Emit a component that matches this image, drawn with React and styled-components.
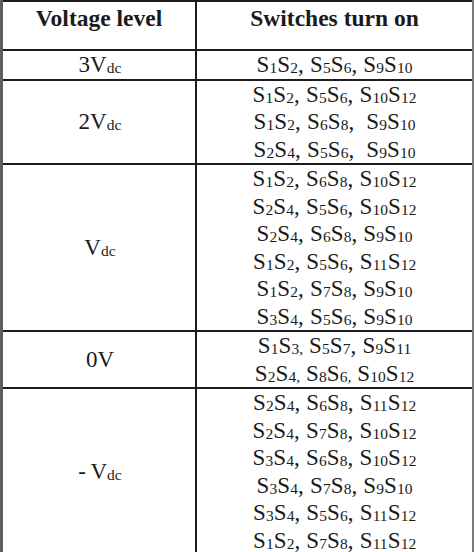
import React from "react";
import styled, { createGlobalStyle } from "styled-components";

const LINE = "#1c1c1c";
const TEXT = "#1a1a1a";
const SERIF = `"Liberation Serif", "Times New Roman", Times, "DejaVu Serif", serif`;

const rows = [
  { label: ["3V", "dc"], lines: ["S1S2, S5S6, S9S10"] },
  {
    label: ["2V", "dc"],
    lines: ["S1S2, S5S6, S10S12", "S1S2, S6S8,  S9S10", "S2S4, S5S6,  S9S10"],
  },
  {
    label: ["V", "dc"],
    lines: [
      "S1S2, S6S8, S10S12",
      "S2S4, S5S6, S10S12",
      "S2S4, S6S8, S9S10",
      "S1S2, S5S6, S11S12",
      "S1S2, S7S8, S9S10",
      "S3S4, S5S6, S9S10",
    ],
  },
  { label: ["0V", ""], lines: ["S1S3^, S5S7, S9S11", "S2S4^, S8S6^, S10S12"] },
  {
    label: ["-\u2009V", "dc"],
    lines: [
      "S2S4, S6S8, S11S12",
      "S2S4, S7S8, S10S12",
      "S3S4, S6S8, S10S12",
      "S3S4, S7S8, S9S10",
      "S3S4, S5S6, S11S12",
      "S1S2, S7S8, S11S12",
    ],
  },
];

// "S12" -> S + subscript 12, "^," -> small comma, double space kept
function renderLine(text) {
  const parts = [];
  const re = /S(\d+)|\^,|  | |,/g;
  let m;
  let i = 0;
  while ((m = re.exec(text))) {
    if (m[1]) {
      parts.push(
        <React.Fragment key={i++}>
          S<Sub>{m[1]}</Sub>
        </React.Fragment>
      );
    } else if (m[0] === "^,") {
      parts.push(<Sub key={i++}>,</Sub>);
    } else if (m[0] === "  ") {
      parts.push(<React.Fragment key={i++}>{"\u00a0\u00a0"}</React.Fragment>);
    } else {
      parts.push(<React.Fragment key={i++}>{m[0]}</React.Fragment>);
    }
  }
  return parts;
}

export default function App() {
  return (
    <>
      <GlobalStyle />
      <Frame>
        <Table>
          <HeaderRow>
            <HeaderCell $left>Voltage level</HeaderCell>
            <HeaderCell>Switches turn on</HeaderCell>
          </HeaderRow>
          {rows.map((row, r) => (
            <Row key={r}>
              <LabelCell>
                <Line>
                  {row.label[0]}
                  {row.label[1] && <Sub>{row.label[1]}</Sub>}
                </Line>
              </LabelCell>
              <Cell>
                {row.lines.map((line, j) => (
                  <Line key={j}>{renderLine(line)}</Line>
                ))}
              </Cell>
            </Row>
          ))}
        </Table>
      </Frame>
    </>
  );
}

const GlobalStyle = createGlobalStyle`
  html, body {
    margin: 0;
    padding: 0;
    background: #ffffff;
    font-family: ${SERIF};
  }
`;

const Frame = styled.div`
  width: 474px;
  height: 552px;
  overflow: hidden;
  box-sizing: border-box;
  border-left: 3px solid #5e5e5e;
  border-right: 2px solid #7c7c7c;
  background: #ffffff;
  font-family: ${SERIF};
  color: ${TEXT};
`;

const Table = styled.div`
  border-top: 2px solid ${LINE};
`;

const Row = styled.div`
  display: grid;
  grid-template-columns: 194px 1fr;
  border-bottom: 2px solid ${LINE};
`;

const HeaderRow = styled(Row)`
  height: 49px;
  box-sizing: border-box;
`;

const HeaderCell = styled.div`
  font-family: ${SERIF};
  font-weight: 700;
  font-size: 23.5px;
  line-height: 30px;
  padding-top: 1px;
  text-align: center;
  border-right: ${(p) => (p.$left ? `2px solid ${LINE}` : "none")};
`;

const LabelCell = styled.div`
  display: flex;
  align-items: center;
  justify-content: center;
  font-size: 23px;
  border-right: 2px solid ${LINE};
  padding-left: 2px;
`;

const Cell = styled.div`
  display: flex;
  flex-direction: column;
  align-items: center;
  font-size: 23px;
  letter-spacing: 0.2px;
`;

const Line = styled.div`
  font-family: ${SERIF};
  height: 27.5px;
  line-height: 27.5px;
  white-space: nowrap;
`;

const Sub = styled.span`
  font-size: 15.5px;
  line-height: 0;
  vertical-align: -1px;
  letter-spacing: 0;
`;
